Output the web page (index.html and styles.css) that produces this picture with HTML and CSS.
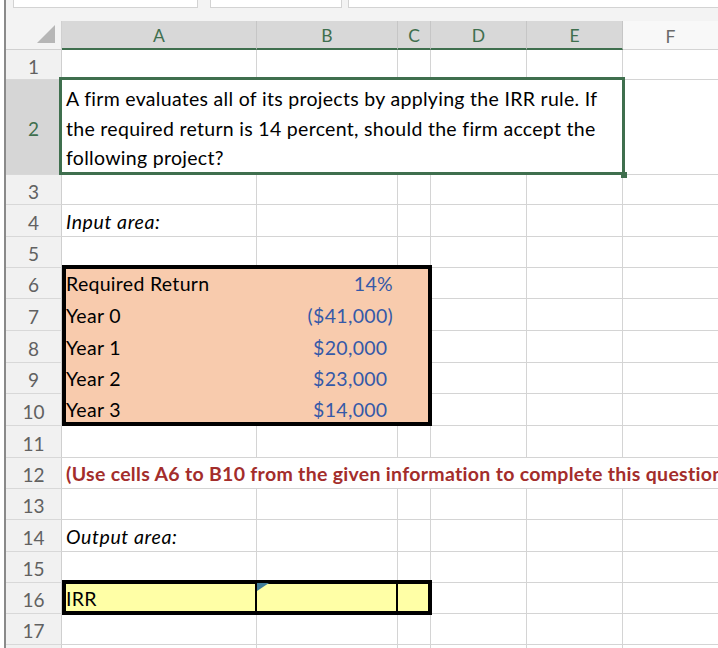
FILE: index.html
```html
<!DOCTYPE html>
<html>
<head>
<meta charset="utf-8">
<title>Sheet</title>
<link rel="stylesheet" href="styles.css">
</head>
<body>
<div class="app">
  <div class="toolbar">
    <div class="fbox fbox-name"></div>
    <div class="fbox fbox-mid"></div>
    <div class="fbox fbox-formula"></div>
  </div>
  <div class="sheet">
    <div class="corner"><svg width="18" height="18" viewBox="0 0 18 18"><polygon points="18,0 18,18 0,18" fill="#b6b6b6"/></svg></div>
    <div class="colhead sel">A</div>
    <div class="colhead sel">B</div>
    <div class="colhead sel">C</div>
    <div class="colhead sel">D</div>
    <div class="colhead sel">E</div>
    <div class="colhead">F</div>

    <div class="rowhead">1</div>
    <div class="cell"></div><div class="cell"></div><div class="cell"></div><div class="cell"></div><div class="cell"></div><div class="cell"></div>

    <div class="rowhead sel">2</div>
    <div class="cell merged"><span class="wrap">A firm evaluates all of its projects by applying the IRR rule. If<br>the required return is 14 percent, should the firm accept the<br>following project?</span><span class="handle"></span></div>
    <div class="cell"></div>

    <div class="rowhead">3</div>
    <div class="cell"></div><div class="cell"></div><div class="cell"></div><div class="cell"></div><div class="cell"></div><div class="cell"></div>

    <div class="rowhead">4</div>
    <div class="cell italic">Input area:</div><div class="cell"></div><div class="cell"></div><div class="cell"></div><div class="cell"></div><div class="cell"></div>

    <div class="rowhead">5</div>
    <div class="cell"></div><div class="cell"></div><div class="cell"></div><div class="cell"></div><div class="cell"></div><div class="cell"></div>

    <div class="rowhead">6</div>
    <div class="inputs">
      <div class="in-lbl">Required Return</div><div class="in-val">14%</div><div class="in-c"></div>
      <div class="in-lbl">Year 0</div><div class="in-val">($41,000)</div><div class="in-c"></div>
      <div class="in-lbl">Year 1</div><div class="in-val">$20,000<span class="pad">)</span></div><div class="in-c"></div>
      <div class="in-lbl">Year 2</div><div class="in-val">$23,000<span class="pad">)</span></div><div class="in-c"></div>
      <div class="in-lbl last">Year 3</div><div class="in-val last">$14,000<span class="pad">)</span></div><div class="in-c"></div>
    </div>
    <div class="cell"></div><div class="cell"></div><div class="cell"></div>

    <div class="rowhead">7</div>
    <div class="cell"></div><div class="cell"></div><div class="cell"></div>
    <div class="rowhead">8</div>
    <div class="cell"></div><div class="cell"></div><div class="cell"></div>
    <div class="rowhead">9</div>
    <div class="cell"></div><div class="cell"></div><div class="cell"></div>
    <div class="rowhead">10</div>
    <div class="cell"></div><div class="cell"></div><div class="cell"></div>

    <div class="rowhead">11</div>
    <div class="cell"></div><div class="cell"></div><div class="cell"></div><div class="cell"></div><div class="cell"></div><div class="cell"></div>

    <div class="rowhead">12</div>
    <div class="cell note">(Use cells A6 to B10 from the given information to complete this question</div>

    <div class="rowhead">13</div>
    <div class="cell"></div><div class="cell"></div><div class="cell"></div><div class="cell"></div><div class="cell"></div><div class="cell"></div>

    <div class="rowhead">14</div>
    <div class="cell italic">Output area:</div><div class="cell"></div><div class="cell"></div><div class="cell"></div><div class="cell"></div><div class="cell"></div>

    <div class="rowhead">15</div>
    <div class="cell"></div><div class="cell"></div><div class="cell"></div><div class="cell"></div><div class="cell"></div><div class="cell"></div>

    <div class="rowhead">16</div>
    <div class="irr">
      <div class="irr-a">IRR</div>
      <div class="irr-b"></div>
      <div class="irr-c"></div>
    </div>
    <div class="cell"></div><div class="cell"></div><div class="cell"></div>

    <div class="rowhead">17</div>
    <div class="cell"></div><div class="cell"></div><div class="cell"></div><div class="cell"></div><div class="cell"></div><div class="cell"></div>

    <div class="rowhead"></div>
    <div class="cell"></div><div class="cell"></div><div class="cell"></div><div class="cell"></div><div class="cell"></div><div class="cell"></div>
  </div>
</div>
</body>
</html>
```

FILE: styles.css
```css
* { box-sizing: border-box; }
html, body { margin: 0; padding: 0; background: #fff; overflow: hidden; }
body { width: 718px; height: 648px; font-family: Lato, "Open Sans", sans-serif; }

.app {
  margin-left: 4px;
  border-left: 2px solid #8a8a8a;
  height: 648px;
  overflow: hidden;
  background: #fff;
}

.toolbar {
  height: 21px;
  background: #f3f3f3;
  display: flex;
  align-items: flex-start;
  padding-left: 7px;
}
.fbox {
  height: 8px;
  background: #fff;
  border: 1px solid #d3d3d3;
  border-top: none;
}
.fbox-name { width: 185px; }
.fbox-mid { width: 132px; margin-left: 12px; }
.fbox-formula { flex: 1; margin-left: 6px; margin-right: -2px; }

.sheet {
  display: grid;
  grid-template-columns: 56px 195px 141px 33px 96px 96px 96px;
  grid-template-rows: 29px 30px 95px 30px 32px 31px 31px 32px 32px 31px 32px 32px 31px 31px 32px 31px 31px 31px 32px;
}

.corner {
  background: #f3f3f3;
  border-right: 1px solid #d0d0d0;
  border-bottom: 1px solid #d0d0d0;
  display: flex;
  justify-content: flex-end;
  align-items: flex-end;
  padding: 0 6px 6px 0;
}
.corner svg { display: block; }

.colhead {
  background: #f8f8f8;
  border-right: 1px solid #d4d4d4;
  border-bottom: 1px solid #d4d4d4;
  display: flex;
  align-items: center;
  justify-content: center;
  padding-top: 2px;
  color: #6a6a6a;
  font-size: 17.5px;
}
.colhead.sel {
  background: #d8d8d8;
  border-right-color: #c6c6c6;
  border-bottom: 2px solid #3f6f4e;
  color: #3f6f4e;
}

.rowhead {
  background: #f1f1f1;
  border-right: 1px solid #cfcfcf;
  border-bottom: 1px solid #d8d8d8;
  display: flex;
  align-items: center;
  justify-content: center;
  padding-top: 3px;
  color: #616161;
  font-size: 19px;
}
.rowhead.sel { background: #d6d6d6; color: #3f6f4e; }

.cell {
  border-right: 1px solid #d4d4d4;
  border-bottom: 1px solid #d4d4d4;
  display: flex;
  align-items: flex-end;
  padding: 0 4px 3px;
  font-size: 19.5px;
  letter-spacing: 0.3px;
  line-height: 22px;
  color: #000;
  white-space: nowrap;
  min-width: 0;
}
.italic { font-style: italic; letter-spacing: 0.6px; }

.merged {
  grid-column: span 5;
  position: relative;
  z-index: 2;
  line-height: 29.5px;
  padding-bottom: 1.5px;
}
.merged::after {
  content: "";
  position: absolute;
  top: -3px;
  left: -3px;
  right: -3px;
  bottom: -1px;
  border: 3px solid #3f6f4e;
}
.wrap { display: block; }
.handle {
  position: absolute;
  right: -5px;
  bottom: -4px;
  width: 6px;
  height: 6px;
  background: #3f6f4e;
  z-index: 3;
}

.note {
  grid-column: span 6;
  font-weight: 700;
  color: #a32d2b;
  overflow: hidden;
  border-right: none;
}

.inputs {
  grid-column: span 3;
  grid-row: span 5;
  margin: -3px -1px 0 0;
  border: 4px solid #000;
  background: #f8cbad;
  display: grid;
  grid-template-columns: 191px 141px 30px;
  grid-template-rows: 30px 32px 32px 31px 28px;
  z-index: 3;
  font-size: 19.5px;
  letter-spacing: 0.3px;
  line-height: 22px;
}
.in-lbl, .in-val {
  display: flex;
  align-items: flex-end;
  padding-bottom: 4px;
  white-space: nowrap;
}
.in-lbl { color: #000; }
.in-val { justify-content: flex-end; padding-right: 5px; color: #3559a8; }
.in-lbl.last, .in-val.last { padding-bottom: 1.5px; }
.pad { visibility: hidden; }

.irr {
  grid-column: span 3;
  margin: -3px -1px -1px 0;
  border: 4px solid #000;
  background: #ffffa6;
  display: grid;
  grid-template-columns: 191px 141px 30px;
  z-index: 3;
  font-size: 19.5px;
  letter-spacing: 0.3px;
  line-height: 22px;
}
.irr-a {
  border-right: 2px solid #000;
  display: flex;
  align-items: flex-end;
  padding-bottom: 1px;
}
.irr-b {
  border-right: 2px solid #000;
  position: relative;
}
.irr-b::before {
  content: "";
  position: absolute;
  top: -1px;
  left: 0;
  width: 0;
  height: 0;
  border-top: 8px solid #3f7c98;
  border-right: 12px solid transparent;
}
```
